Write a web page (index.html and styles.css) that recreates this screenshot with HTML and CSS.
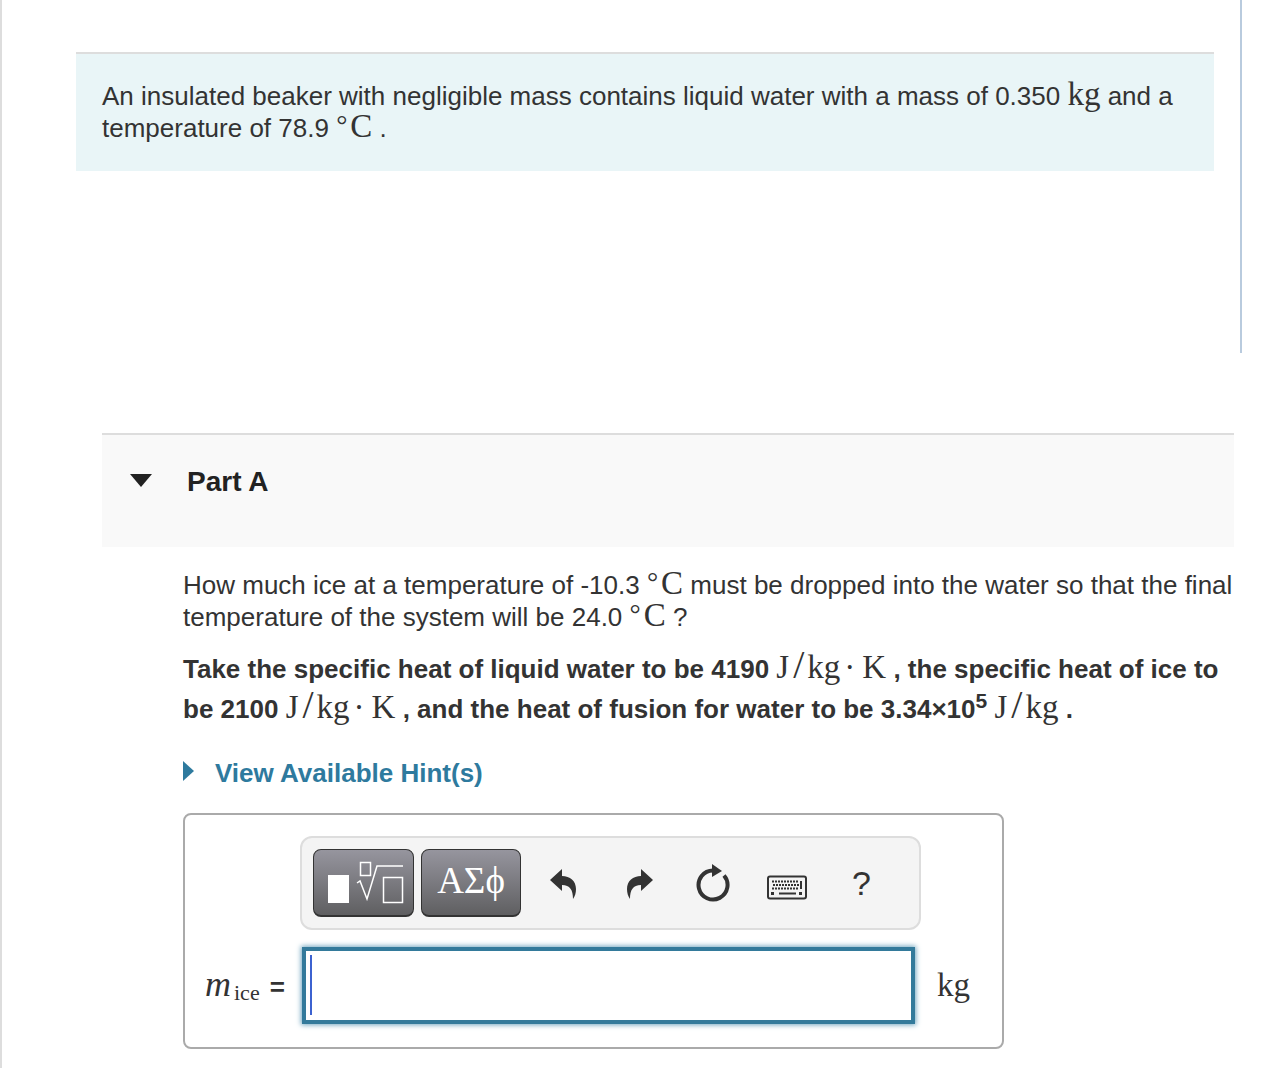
FILE: index.html
```html
<!DOCTYPE html>
<html lang="en">
<head>
    <meta charset="UTF-8">
    <meta name="viewport" content="width=device-width, initial-scale=1.0">
    <title>Part A</title>
    <link rel="stylesheet" href="styles.css">
</head>
<body>
    <div class="page">
        <div class="top">
            <div class="intro">
                An insulated beaker with negligible mass contains liquid water with a mass of 0.350 <span class="math">kg</span> and a<br>
                temperature of 78.9 <span class="math"><span class="deg">&#176;</span>C</span> .
            </div>
        </div>

        <div class="part-head">
            <span class="part-arrow"></span>
            <h2>Part A</h2>
        </div>

        <div class="part-body">
            <p class="question">
                How much ice at a temperature of -10.3 <span class="math"><span class="deg">&#176;</span>C</span> must be dropped into the water so that the final<br>
                temperature of the system will be 24.0 <span class="math"><span class="deg">&#176;</span>C</span> ?
            </p>
            <p class="given">
                Take the specific heat of liquid water to be 4190 <span class="math">J<span class="slash">/</span>kg<span class="dot">&#183;</span>K</span> , the specific heat of ice to<br>
                be 2100 <span class="math">J<span class="slash">/</span>kg<span class="dot">&#183;</span>K</span> , and the heat of fusion for water to be 3.34&#215;10<sup>5</sup> <span class="math">J<span class="slash">/</span>kg</span> .
            </p>
            <div class="hint">
                <span class="hint-arrow"></span>
                <a href="#">View Available Hint(s)</a>
            </div>

            <div class="answer">
                <div class="toolbar">
                    <button class="tool-btn template-btn" type="button" aria-label="Templates">
                        <svg width="99" height="65" viewBox="0 0 99 65">
                            <rect x="14" y="25" width="21" height="28" fill="#fff"/>
                            <rect x="46.500" y="12.500" width="10" height="13" fill="none" stroke="#fff" stroke-width="1.5"/>
                            <path d="M43 33l3-2 7 18 10-33h26" fill="none" stroke="#fff" stroke-width="1.5"/>
                            <rect x="69.500" y="27.500" width="19" height="25" fill="none" stroke="#fff" stroke-width="1.5"/>
                        </svg>
                    </button>
                    <button class="tool-btn greek-btn" type="button">&#913;&#931;&#981;</button>
                    <div class="tool-icons">
                        <svg class="tool-icon" width="28" height="32" viewBox="0 0 28 32"><path d="M1 13L13 2v7c8 0 14 5 14 13 0 4-1 7-3 10 0-9-3-14-11-14v6z" fill="#333"/></svg>
                        <svg class="tool-icon" width="28" height="32" viewBox="0 0 28 32"><path d="M27 13L15 2v7C7 9 1 14 1 22c0 4 1 7 3 10 0-9 3-14 11-14v6z" fill="#333"/></svg>
                        <svg class="tool-icon" width="34" height="38" viewBox="0 0 34 38"><path d="M17 6.500A14.500 14.500 0 1 0 28 11.500" fill="none" stroke="#333" stroke-width="4"/><path d="M16 0l10 7-10 6z" fill="#333"/></svg>
                        <svg class="tool-icon keyboard" width="40" height="26" viewBox="0 0 40 26">
                            <rect x="1" y="1.500" width="38" height="22" rx="2" fill="#f4f4f4" stroke="#333" stroke-width="2"/>
                            <path d="M5 6.500h26M6 10h26M5 13.500h27" fill="none" stroke="#333" stroke-width="2" stroke-dasharray="2 1"/>
                            <path d="M12 18.500h17M34 6v8" fill="none" stroke="#333" stroke-width="2"/>
                            <path d="M4 17h3v3h-3zM32 17h3v3h-3z" fill="#333"/>
                        </svg>
                        <span class="tool-help">?</span>
                    </div>
                </div>
                <div class="answer-row">
                    <span class="answer-label"><i>m</i><sub>ice</sub> <span class="equals">=</span></span>
                    <div class="answer-input"><span class="caret"></span></div>
                    <span class="answer-unit">kg</span>
                </div>
            </div>
        </div>
    </div>
</body>
</html>
```

FILE: styles.css
```css
/* General */
body, h2, p {
    margin: 0;
    padding: 0;
}

body {
    font-family: "Liberation Sans", Arial, sans-serif;
    font-size: 26px;
    color: #333;
    background: #fff;
}

.page {
    border-left: 2px solid #ddd;
    height: 1068px;
    box-sizing: border-box;
    overflow: hidden;
}

/* Math runs */
.math {
    font-family: "Liberation Serif", "Times New Roman", serif;
    font-size: 33px;
    font-weight: normal;
    line-height: 0;
}

.deg {
    font-size: 28px;
    margin-right: 3px;
    position: relative;
    top: -3px;
}

.slash {
    font-size: 40px;
    margin: 0 3px 0 4px;
}

.dot {
    margin: 0 7px 0 4px;
}

/* Intro block */
.top {
    width: 1238px;
    height: 301px;
    padding-top: 52px;
    border-right: 2px solid #b9cbde;
}

.intro {
    margin-left: 74px;
    width: 1138px;
    box-sizing: border-box;
    height: 119px;
    padding: 26px 26px 0;
    border-top: 2px solid #ddd;
    background: #e9f5f7;
    line-height: 32px;
    white-space: nowrap;
}

/* Part header */
.part-head {
    margin: 80px 0 0 100px;
    width: 1132px;
    height: 114px;
    box-sizing: border-box;
    border-top: 2px solid #ddd;
    background: #f9f9f9;
    display: flex;
    align-items: center;
    padding: 0 0 18px 28px;
}

.part-arrow {
    width: 0;
    height: 0;
    margin-bottom: 3px;
    border-left: 11px solid transparent;
    border-right: 11px solid transparent;
    border-top: 13px solid #222;
}

.part-head h2 {
    margin-left: 35px;
    font-size: 28px;
    line-height: 32px;
    color: #222;
}

/* Part body */
.part-body {
    margin-left: 181px;
    width: 1060px;
}

.question {
    padding-top: 22px;
    line-height: 32px;
    white-space: nowrap;
}

.given {
    margin-top: 16px;
    font-weight: bold;
    line-height: 40px;
    white-space: nowrap;
}

.given sup {
    font-size: 21px;
    line-height: 0;
}

.hint {
    margin-top: 20px;
    display: flex;
    align-items: center;
    height: 48px;
}

.hint-arrow {
    width: 0;
    height: 0;
    margin-bottom: 4px;
    border-top: 10px solid transparent;
    border-bottom: 10px solid transparent;
    border-left: 11px solid #2e7a9e;
}

.hint a {
    margin-left: 21px;
    font-size: 26px;
    font-weight: bold;
    color: #2e7a9e;
    text-decoration: none;
}

/* Answer box */
.answer {
    margin-top: 16px;
    width: 821px;
    height: 236px;
    box-sizing: border-box;
    border: 2px solid #aaa;
    border-radius: 8px;
    padding: 21px 0 0 115px;
}

.toolbar {
    width: 621px;
    height: 94px;
    box-sizing: border-box;
    border: 2px solid #ddd;
    border-radius: 12px;
    background: #f4f4f4;
    display: flex;
    align-items: center;
    padding-left: 11px;
    gap: 7px;
}

.tool-btn {
    height: 68px;
    padding: 0;
    border: 1px solid #333;
    border-bottom-width: 2px;
    border-radius: 8px;
    background: linear-gradient(#96959e, #5f5f61);
    color: #fff;
    display: flex;
    align-items: center;
    justify-content: center;
}

.template-btn {
    width: 101px;
}

.greek-btn {
    width: 100px;
    padding-bottom: 5px;
    font-family: "Liberation Serif", serif;
    font-size: 37px;
}

.tool-icons {
    display: flex;
    align-items: center;
    margin-left: 21px;
}

.tool-icon {
    flex: none;
}

.tool-icon:nth-child(2) {
    margin-left: 49px;
}

.tool-icon:nth-child(3) {
    margin-left: 42px;
}

.tool-icon.keyboard {
    margin: 10px 0 0 37px;
}

.tool-help {
    margin-left: 45px;
    font-size: 34px;
    line-height: 38px;
    color: #333;
}

.answer-row {
    display: flex;
    align-items: center;
    margin: 17px 0 0 -115px;
}

.answer-label {
    width: 117px;
    box-sizing: border-box;
    padding-left: 20px;
    white-space: nowrap;
    font-family: "Liberation Serif", serif;
    font-size: 36px;
    line-height: 40px;
}

.answer-label sub {
    font-size: 22px;
    line-height: 0;
    margin-left: 3px;
    vertical-align: -4px;
}

.equals {
    font-family: "Liberation Sans", sans-serif;
    font-size: 26px;
    font-weight: bold;
    margin-left: 1px;
}

.answer-input {
    width: 613px;
    height: 77px;
    box-sizing: border-box;
    border: 4px solid #337a9b;
    box-shadow: 0 0 5px 1px #6fa5bf;
    padding: 4px;
    background: #fff;
}

.caret {
    display: block;
    width: 2px;
    height: 60px;
    background: #3c62d0;
}

.answer-unit {
    margin-left: 22px;
    font-family: "Liberation Serif", serif;
    font-size: 33px;
}
```
